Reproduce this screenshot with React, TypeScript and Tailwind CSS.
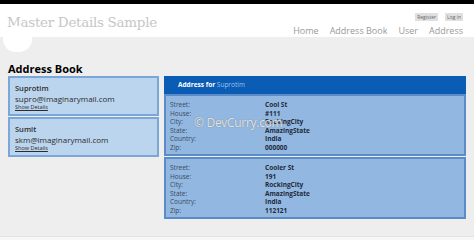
import React from 'react'

const contacts = [
  { name: 'Suprotim', email: 'supro@imaginarymail.com' },
  { name: 'Sumit', email: 'skm@imaginarymail.com' },
]

const addresses = [
  { street: 'Cool St', house: '#111', city: 'RockingCity', state: 'AmazingState', country: 'India', zip: '000000' },
  { street: 'Cooler St', house: '191', city: 'RockingCity', state: 'AmazingState', country: 'India', zip: '112121' },
]

const fields: [string, keyof (typeof addresses)[number]][] = [
  ['Street:', 'street'],
  ['House:', 'house'],
  ['City:', 'city'],
  ['State:', 'state'],
  ['Country:', 'country'],
  ['Zip:', 'zip'],
]

export default function App() {
  return (
    <div className="relative w-[474px] h-[240px] overflow-hidden bg-[#eeeeee] font-['Open_Sans',sans-serif]">
      <div className="h-[4px] bg-black" />

      {/* header */}
      <header className="relative h-[33px] bg-white flex justify-between">
        <h1 className="pl-[7px] pt-[10px] font-['DejaVu_Serif',serif] text-[13.5px] leading-[16px] text-[#c6c6c6] tracking-[-0.3px]">
          Master Details Sample
        </h1>
        <div className="flex flex-col items-end pr-[11px] pt-[9px]">
          <div className="flex gap-[7px] text-[5px] leading-[8px] text-[#666]">
            <span className="bg-[#e0e0e0] px-[2px]">Register</span>
            <span className="bg-[#e0e0e0] px-[2px]">Log in</span>
          </div>
          <nav className="mt-[4px] flex gap-[11px] text-[9px] leading-[12px] text-[#9a9a9a]">
            <span>Home</span>
            <span>Address Book</span>
            <span>User</span>
            <span>Address</span>
          </nav>
        </div>
        <div className="absolute left-[3px] top-[22px] w-[29px] h-[26px] rounded-full bg-white" />
      </header>

      <main className="px-[8px] pt-[25px]">
        <h2 className="font-bold text-[11px] leading-[14px] text-black">Address Book</h2>
        <div className="flex gap-[5px]">
          {/* master list */}
          <div className="w-[151px] flex flex-col gap-[1px]">
            {contacts.map((c) => (
              <div key={c.name} className="h-[40px] bg-[#bcd5ee] border-2 border-[#7aa6d8] pl-[5px] pt-[5px] text-[#2c2c2c]">
                <div className="text-[7.5px] leading-[10px] font-semibold">{c.name}</div>
                <div className="text-[8px] leading-[11px]">{c.email}</div>
                <div className="text-[5.5px] leading-[7px] underline">Show Details</div>
              </div>
            ))}
          </div>

          {/* details */}
          <div className="relative w-[302px]">
            <div className="h-[18px] bg-[#0a5cb4] pl-[14px] text-[6.5px] leading-[17px] text-white">
              <span className="font-bold">Address for </span>
              <span className="text-[#9cc3ee]">Suprotim</span>
            </div>
            {addresses.map((a, i) => (
              <div key={i} className="h-[62px] mb-[1px] bg-[#92b7e1] border-2 border-[#5b8cc8] pl-[4px] pt-[5px]">
                {fields.map(([label, key]) => (
                  <div key={key} className="flex text-[6.5px] leading-[8.6px]">
                    <span className="w-[95px] text-[#3c4a5c]">{label}</span>
                    <span className="font-bold text-[#1f2a3a]">{a[key]}</span>
                  </div>
                ))}
              </div>
            ))}
            <div className="absolute left-[30px] top-[40px] text-[12px] leading-[14px] text-white/80 tracking-[-0.3px] [text-shadow:0_0_1px_#666]">
              © DevCurry.com
            </div>
          </div>
        </div>
      </main>

      <div className="absolute left-0 right-0 bottom-0 h-[4px] bg-[#f7f7f7] border-t border-[#e3e3e3]" />
    </div>
  )
}
